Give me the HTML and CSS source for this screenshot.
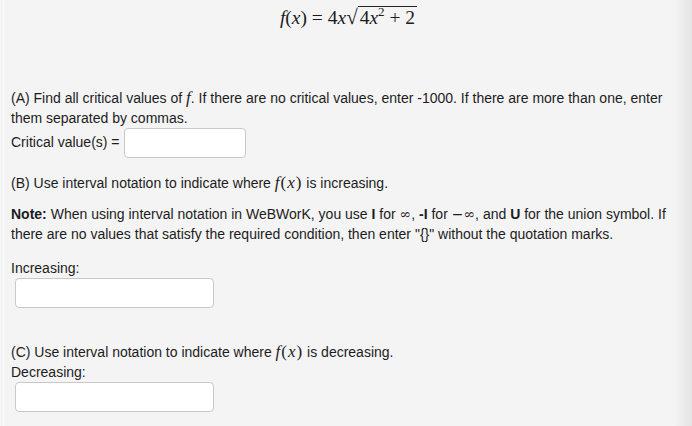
FILE: index.html
```html
<!DOCTYPE html>
<html>
<head>
<meta charset="utf-8">
<link rel="stylesheet" href="styles.css">
</head>
<body>
<div class="page">
  <div class="formula">
    <span class="mi">f</span>(<span class="mi">x</span>) = 4<span class="mi">x</span><span class="sqrt"><span class="rad">√</span><span class="radicand">4<span class="mi">x</span><sup>2</sup> + 2</span></span>
  </div>

  <p class="para pa">(A) Find all critical values of <span class="mf">f</span>. If there are no critical values, enter -1000. If there are more than one, enter them separated by commas.<br>Critical value(s) = <span class="input small"></span></p>

  <p class="para pb">(B) Use interval notation to indicate where <span class="mf">f</span><span class="mp">(</span><span class="mf">x</span><span class="mp">)</span> is increasing.</p>

  <p class="para note"><b>Note:</b> When using interval notation in WeBWorK, you use <b>I</b> for <span class="inf">∞</span>, <b>-I</b> for <span class="inf">−∞</span>, and <b>U</b> for the union symbol. If there are no values that satisfy the required condition, then enter "{}" without the quotation marks.</p>

  <p class="para inc">Increasing:</p>
  <div class="input wide"></div>

  <p class="para pc">(C) Use interval notation to indicate where <span class="mf">f</span><span class="mp">(</span><span class="mf">x</span><span class="mp">)</span> is decreasing.<br>Decreasing:</p>
  <div class="input wide"></div>
</div>
</body>
</html>
```

FILE: styles.css
```css
html, body {
  margin: 0;
  padding: 0;
  height: 100%;
}
body {
  background: #f4f4f4;
  font-family: "Liberation Sans", Arial, sans-serif;
  font-size: 14px;
  color: #1c1c1c;
  overflow: hidden;
}
.page {
  height: 426px;
  box-sizing: border-box;
  margin-left: 3px;
  border-left: 1px solid #fbfbfb;
  padding: 0 4px 0 7px;
  background: linear-gradient(to right, #f4f4f4 0, #f4f4f4 calc(100% - 18px), #e4e4e4 100%);
}
.formula {
  text-align: center;
  font-family: "Liberation Serif", "Times New Roman", serif;
  font-size: 19.5px;
  padding-top: 6px;
  height: 30px;
  line-height: 22px;
  padding-right: 2px;
}
.mi { font-style: italic; }
.sqrt { display: inline-block; }
.rad { font-size: 21px; }
.radicand {
  border-top: 1px solid #222;
  padding: 0 2px;
  display: inline-block;
  line-height: 21px;
}
sup { font-size: 13px; line-height: 0; vertical-align: 8px; }
.para {
  margin: 0;
  line-height: 20px;
}
.pa { margin-top: 52px; }
.mf, .mp {
  font-family: "Liberation Serif", "Times New Roman", serif;
  font-size: 17px;
  line-height: 1;
}
.mf { font-style: italic; }
.mp { padding: 0 1px; }
.inf {
  font-family: "DejaVu Serif", serif;
  font-size: 14px;
  line-height: 1;
}
.input {
  display: inline-block;
  box-sizing: border-box;
  height: 30px;
  background: #fff;
  border: 1px solid #c8c8c8;
  border-radius: 4px;
  vertical-align: middle;
}
.small { width: 122px; margin-left: 1px; }
.pb { margin-top: 15px; }
.note { margin-top: 11px; }
.inc { margin-top: 14px; }
.wide { display: block; width: 199px; margin-left: 4px; }
.pc { margin-top: 34px; }
```
